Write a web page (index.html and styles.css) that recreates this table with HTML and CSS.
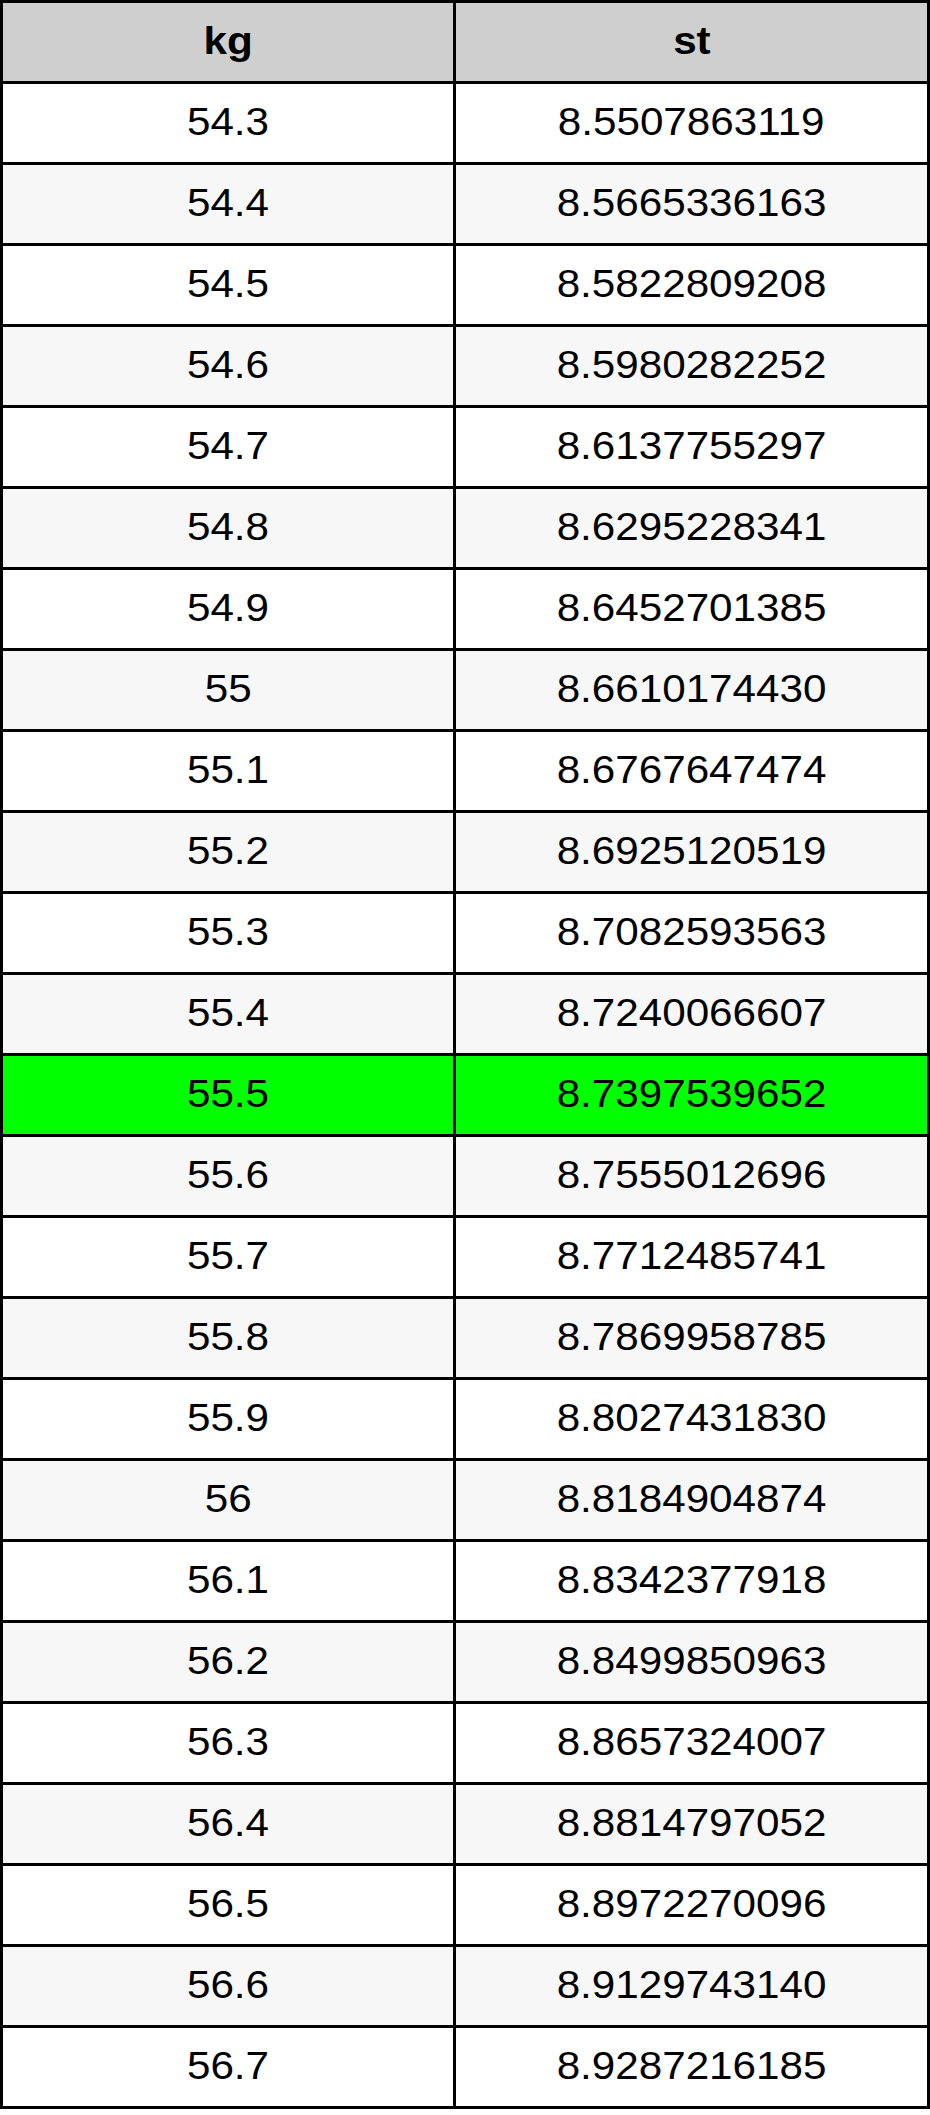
FILE: index.html
```html
<!DOCTYPE html>
<html>
<head>
<meta charset="utf-8">
<link rel="stylesheet" href="styles.css">
</head>
<body>
<table class="conv">
<colgroup><col class="c-kg"><col class="c-st"></colgroup>
<thead>
<tr><th><span class="t">kg</span></th><th><span class="t">st</span></th></tr>
</thead>
<tbody>
<tr><td><span class="t">54.3</span></td><td><span class="t">8.5507863119</span></td></tr>
<tr><td><span class="t">54.4</span></td><td><span class="t">8.5665336163</span></td></tr>
<tr><td><span class="t">54.5</span></td><td><span class="t">8.5822809208</span></td></tr>
<tr><td><span class="t">54.6</span></td><td><span class="t">8.5980282252</span></td></tr>
<tr><td><span class="t">54.7</span></td><td><span class="t">8.6137755297</span></td></tr>
<tr><td><span class="t">54.8</span></td><td><span class="t">8.6295228341</span></td></tr>
<tr><td><span class="t">54.9</span></td><td><span class="t">8.6452701385</span></td></tr>
<tr><td><span class="t">55</span></td><td><span class="t">8.6610174430</span></td></tr>
<tr><td><span class="t">55.1</span></td><td><span class="t">8.6767647474</span></td></tr>
<tr><td><span class="t">55.2</span></td><td><span class="t">8.6925120519</span></td></tr>
<tr><td><span class="t">55.3</span></td><td><span class="t">8.7082593563</span></td></tr>
<tr><td><span class="t">55.4</span></td><td><span class="t">8.7240066607</span></td></tr>
<tr class="hl"><td><span class="t">55.5</span></td><td><span class="t">8.7397539652</span></td></tr>
<tr><td><span class="t">55.6</span></td><td><span class="t">8.7555012696</span></td></tr>
<tr><td><span class="t">55.7</span></td><td><span class="t">8.7712485741</span></td></tr>
<tr><td><span class="t">55.8</span></td><td><span class="t">8.7869958785</span></td></tr>
<tr><td><span class="t">55.9</span></td><td><span class="t">8.8027431830</span></td></tr>
<tr><td><span class="t">56</span></td><td><span class="t">8.8184904874</span></td></tr>
<tr><td><span class="t">56.1</span></td><td><span class="t">8.8342377918</span></td></tr>
<tr><td><span class="t">56.2</span></td><td><span class="t">8.8499850963</span></td></tr>
<tr><td><span class="t">56.3</span></td><td><span class="t">8.8657324007</span></td></tr>
<tr><td><span class="t">56.4</span></td><td><span class="t">8.8814797052</span></td></tr>
<tr><td><span class="t">56.5</span></td><td><span class="t">8.8972270096</span></td></tr>
<tr><td><span class="t">56.6</span></td><td><span class="t">8.9129743140</span></td></tr>
<tr><td><span class="t">56.7</span></td><td><span class="t">8.9287216185</span></td></tr>
</tbody>
</table>
</body>
</html>
```
FILE: styles.css
```css
html, body {
  margin: 0;
  padding: 0;
  background: #ffffff;
}

.conv {
  width: 930px;
  table-layout: fixed;
  border-collapse: separate;
  border-spacing: 3px;
  background: #000000;
  font-family: "Liberation Sans", Arial, sans-serif;
  color: #000000;
}

.c-kg { width: 450px; }
.c-st { width: 471px; }

.conv th,
.conv td {
  height: 78px;
  padding: 0 0 2px 0;
  box-sizing: border-box;
  text-align: center;
  vertical-align: middle;
  font-size: 38px;
  line-height: 42px;
}

.conv th {
  background: #cfcfcf;
  font-weight: bold;
}

.conv td {
  background: #ffffff;
  font-weight: normal;
}

.conv tbody tr:nth-child(even) td {
  background: #f7f7f7;
}

.conv tbody tr.hl td {
  background: #00ff00;
}

.t {
  display: inline-block;
  transform: scaleX(1.11);
}
```
